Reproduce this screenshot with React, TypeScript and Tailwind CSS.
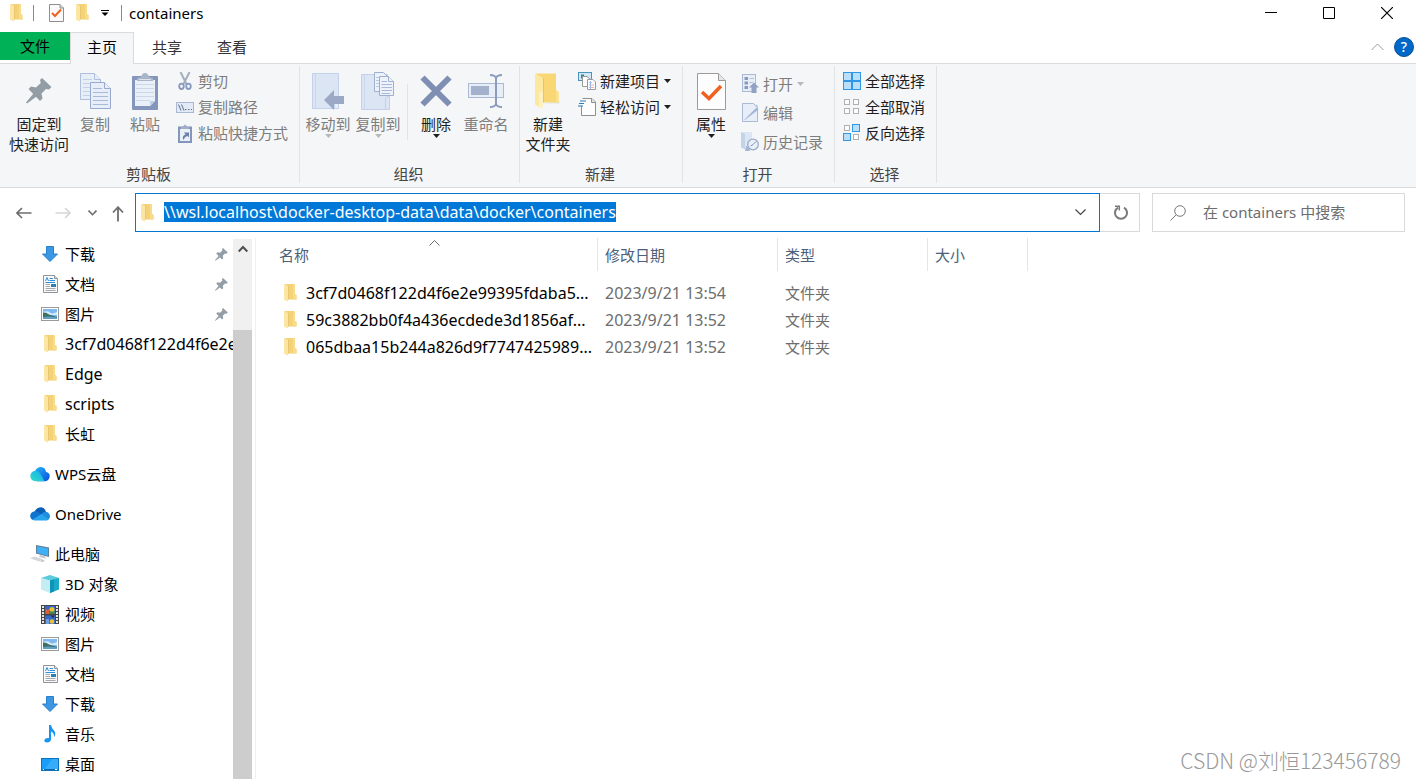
import { useEffect, useRef, useState } from 'react'
import type { ReactNode } from 'react'

type IconProps = { className?: string }

function FolderIcon({ className = '' }: IconProps) {
  return (
    <svg className={className} width="13" height="18" viewBox="0 0 13 18">
      <path d="M1 0H11V10L12.5 11V15.5H3Z" fill="#f3d278" />
      <path d="M9 0H11V10L12.5 11V15.5H9Z" fill="#f8dc8b" />
      <path d="M4 2L5 2.5V15.5H4Z" fill="#e9c670" />
      <path d="M0 0L4 2V17.5L2.5 17L0 15.5Z" fill="#fde6a4" />
    </svg>
  )
}

function BigFolderIcon() {
  return (
    <svg width="26" height="36" viewBox="0 0 26 36">
      <path d="M22 29H26L24 30.5H8Z" fill="#d9d9d9" opacity=".6" />
      <path d="M1 .5H21V17L23.5 19V29.5H4Z" fill="#f9d774" />
      <path d="M21 17L23.5 19V29.5H21Z" fill="#fde08a" />
      <path d="M8 5L9 5.5V29.5H8Z" fill="#eac35c" />
      <path d="M0 .5L8 5V35L4 34L0 31.5Z" fill="#fde89f" />
      <path d="M4 20L8 18V35L4 34Z" fill="#fef2c4" />
    </svg>
  )
}

function PinIcon({ size = 26 }: { size?: number }) {
  return (
    <svg width={size} height={size} viewBox="0 0 26 26" fill="#929da5">
      <path d="M16 0L25.5 9L23 11.5L20 11L15.5 15.5L16.5 20.5L14 23L2.5 11L5 8.5L10 9.5L14.8 5L14 2Z" />
      <path d="M7.5 15.5L0 24.5L1 25.5L10.5 18.5Z" />
    </svg>
  )
}

function CopyIcon() {
  return (
    <svg width="31" height="37" viewBox="0 0 31 37" fill="#e8eef8" stroke="#aebfdc">
      <path d="M.5 .5H14.5L20.5 6.5V26.5H.5Z" />
      <path d="M14.5 .5V6.5H20.5" />
      <path d="M3 6.5H12M3 10.5H10M3 14.5H10M3 18.5H10M3 22.5H10" stroke="#c3d0e6" />
      <path d="M10.5 9.5H24.5L30.5 15.5V35.5H10.5Z" stroke="#98abce" />
      <path d="M24.5 9.5V15.5H30.5" stroke="#98abce" />
      <path d="M13 15.5H22M13 19.5H28M13 23.5H28M13 27.5H28M13 31.5H28" stroke="#a9bad8" />
    </svg>
  )
}

function PasteIcon() {
  return (
    <svg width="26" height="37" viewBox="0 0 26 37">
      <rect y="3" width="26" height="34" rx="1" fill="#8496bb" />
      <path d="M3 7H23V28L18 33H3Z" fill="#eaf0f8" />
      <path d="M23 28H18V33Z" fill="#c3cfe2" />
      <path d="M4 11.5H22M4 15.5H22M4 19.5H22M4 23.5H22M4 27.5H18" stroke="#ccd8ea" />
      <path d="M5 8V5L9 4Q10 0 13 0T17 4L21 5V8Z" fill="#a9b5ca" />
      <path d="M7 6.5H19" stroke="#dde4ef" />
    </svg>
  )
}

function ScissorsIcon() {
  return (
    <svg width="14" height="18" viewBox="0 0 14 18" fill="none">
      <path d="M2.5 0L8.5 12M11.5 0L5.5 12" stroke="#a5aebd" strokeWidth="2" />
      <ellipse cx="3.5" cy="14.3" rx="2.3" ry="2.7" stroke="#8799bf" strokeWidth="1.8" />
      <ellipse cx="10.5" cy="14.3" rx="2.3" ry="2.7" stroke="#8799bf" strokeWidth="1.8" />
    </svg>
  )
}

function CopyPathIcon() {
  return (
    <svg width="18" height="11" viewBox="0 0 18 11">
      <rect x=".5" y=".5" width="17" height="10" fill="#e3eaf5" stroke="#a9b9d4" />
      <path d="M2.5 2.5L5 8.5M5.5 2.5L8 8.5" stroke="#5f708f" fill="none" />
      <path d="M9 7.5H10.5M12 7.5H13.5M15 7.5H16" stroke="#5f708f" />
    </svg>
  )
}

function PasteShortcutIcon() {
  return (
    <svg width="14" height="19" viewBox="0 0 14 19">
      <path d="M0 2.5H14V19H0Z" fill="#8496bb" />
      <path d="M2 5H12V17H2Z" fill="#eaf0f8" />
      <path d="M3 5V3L5.5 2Q7 -1 8.5 2L11 3V5Z" fill="#a2aec5" />
      <path d="M5 15.5Q4 11.5 7.5 10.5L6 8.5H11V13.5L9.5 12Q6.5 12.5 6 15.5Z" fill="#6c80ab" />
    </svg>
  )
}

function MoveToIcon() {
  return (
    <svg width="33" height="37" viewBox="0 0 33 37">
      <path d="M.5 .5H26.5V35.5H.5Z" fill="#dbe5f4" stroke="#c3d1ea" />
      <path d="M3.5 1V35" stroke="#cad7ec" />
      <path d="M22.5 26L26.5 24V35.5H22.5Z" fill="#e8effa" stroke="#c3d1ea" />
      <path d="M12 27L22 17V23H32V31H22V37Z" fill="#9ba9c7" />
    </svg>
  )
}

function CopyToIcon() {
  return (
    <svg width="34" height="39" viewBox="0 0 34 39">
      <path d="M.5 2.5H26.5V37.5H.5Z" fill="#dbe5f4" stroke="#c3d1ea" />
      <path d="M3.5 3V37" stroke="#cad7ec" />
      <path d="M24.5 26L28.5 23.5V37.5H24.5Z" fill="#dbe5f4" stroke="#c3d1ea" />
      <g fill="#edf2fa" stroke="#9fb0ce">
        <path d="M13.5 .5H22.5L27.5 5.5V19.5H13.5Z" />
        <path d="M15 5.5H20M15 8.5H19M15 11.5H19M15 14.5H19" stroke="#b9c7df" />
        <path d="M18.5 4.5H27.5L32.5 9.5V23.5H18.5Z" />
        <path d="M27.5 4.5V9.5H32.5" />
        <path d="M20.5 9.5H26M20.5 12.5H31M20.5 15.5H31M20.5 18.5H31M20.5 21.5H29" stroke="#a9bad8" />
      </g>
    </svg>
  )
}

function DeleteIcon() {
  return (
    <svg width="32" height="32" viewBox="0 0 32 32">
      <path d="M2.5 2.5L29.5 29.5M29.5 2.5L2.5 29.5" stroke="#7f8fb4" strokeWidth="6" />
    </svg>
  )
}

function RenameIcon() {
  return (
    <svg width="36" height="34" viewBox="0 0 36 34" fill="none">
      <rect x=".5" y="9.5" width="35" height="14" fill="#e8eef8" stroke="#a9b9d6" />
      <rect x="3" y="12" width="18" height="9" fill="#a4b1cc" />
      <path d="M28 3V31M22 1Q27 1 28 4Q29 1 34 1M22 33Q27 33 28 30Q29 33 34 33" stroke="#8c9cbf" strokeWidth="2" />
    </svg>
  )
}

function PropertiesIcon() {
  return (
    <svg width="29" height="37" viewBox="0 0 29 37">
      <path d="M.5 .5H21.5L28.5 7.5V36.5H.5Z" fill="#fdfdfd" stroke="#9b9b9b" />
      <path d="M21.5 .5V7.5H28.5" fill="#e6e6e6" stroke="#9b9b9b" />
      <path d="M5 19L12 25.5L24 13" stroke="#f1601d" strokeWidth="3.5" fill="none" />
    </svg>
  )
}

function SmallPropertiesIcon() {
  return (
    <svg width="15" height="18" viewBox="0 0 15 18">
      <path d="M.5 .5H11L14.5 4V17.5H.5Z" fill="#fafafa" stroke="#8f8f8f" />
      <path d="M11 .5V4H14.5" fill="#dcdcdc" stroke="#8f8f8f" />
      <path d="M3 9L6 12L12 5.5" stroke="#f1601d" strokeWidth="2" fill="none" />
    </svg>
  )
}

function NewItemIcon() {
  return (
    <svg width="18" height="18" viewBox="0 0 18 18">
      <rect x=".5" y=".5" width="13" height="8" fill="#cfe8f5" stroke="#4a94bd" />
      <path d="M3 2.5H6V6.5H3Z" fill="#3d7f8f" />
      <path d="M4.5 4.5H9L12.5 7.5V14.5H4.5Z" fill="#fff" stroke="#9a9a9a" />
      <path d="M9.5 7.5H15L17.5 10V17.5H9.5Z" fill="#fff" stroke="#9a9a9a" />
      <path d="M11 10.5H14M11 13H16M11 15.5H16" stroke="#e9b4b4" />
      <path d="M12.5 9V17" stroke="#9dbbe6" />
    </svg>
  )
}

function EasyAccessIcon() {
  return (
    <svg width="18" height="18" viewBox="0 0 18 18">
      <path d="M4.5 .5H14L17.5 4V17.5H3.5V8" fill="#fdfdfd" stroke="#8f8f8f" />
      <path d="M13.5 .5V4.5H17.5" fill="#e3e3e3" stroke="#8f8f8f" />
      <path d="M2 3H8M1 5.5H6M0 8H5" stroke="#2b7bb9" strokeWidth="1.2" />
    </svg>
  )
}

function OpenIcon() {
  return (
    <svg width="17" height="19" viewBox="0 0 17 19">
      <rect x=".5" y=".5" width="13" height="17" fill="#e8eef8" stroke="#a9b9d6" />
      <path d="M2.5 3H6V6H2.5ZM2.5 7.5H6V10.5H2.5ZM2.5 12H6V15H2.5Z" fill="#8799bf" />
      <path d="M7.5 4.5H12M7.5 8.5H11" stroke="#b3c1db" />
      <path d="M12 8.5L17 13.5H14.5V19H9.5V13.5H7Z" fill="#92a2c4" />
    </svg>
  )
}

function EditIcon() {
  return (
    <svg width="17" height="19" viewBox="0 0 17 19">
      <path d="M.5 .5H11.5L15.5 4.5V18.5H.5Z" fill="#e8eef8" stroke="#a9b9d6" />
      <path d="M1.5 17.5L14.5 4.5L16.5 6.5L3.5 16.5Z" fill="#a3b5d6" />
      <path d="M12 2.5L15 1.5L16.5 4" fill="#b9c7e0" />
    </svg>
  )
}

function HistoryIcon() {
  return (
    <svg width="18" height="19" viewBox="0 0 18 19">
      <path d="M1 0H11V15H1Z" fill="#dbe5f4" />
      <path d="M0 0L4 2V17.5L0 15.5Z" fill="#c5d3ea" />
      <circle cx="12" cy="12.5" r="5.3" fill="#eaf0f8" stroke="#9aabca" strokeWidth="1.3" />
      <path d="M12 12.5L15 9.5M12 12.5L9.5 14" stroke="#7f91b5" />
      <path d="M5 14Q8 15 9 19H4Z" fill="#a5b5d0" />
    </svg>
  )
}

// kind: 全选 / 全不选 / 反选
function SelectIcon({ kind }: { kind: 'all' | 'none' | 'invert' }) {
  if (kind === 'all') {
    return (
      <svg width="18" height="18" viewBox="0 0 18 18">
        <rect width="18" height="18" fill="#2f97e5" />
        <path d="M1 1H8V8H1ZM10 1H17V8H10ZM1 10H8V17H1ZM10 10H17V17H10Z" fill="#b9dffb" />
      </svg>
    )
  }
  const cells = [[1, 1], [10, 1], [1, 10], [10, 10]]
  return (
    <svg width="18" height="18" viewBox="0 0 18 18">
      {cells.map(([x, y], i) => {
        const on = kind === 'invert' && (i === 1 || i === 2)
        return on ? (
          <rect key={i} x={x - 0.5} y={y - 0.5} width="7" height="7" fill="#b9dffb" stroke="#2f97e5" />
        ) : (
          <rect key={i} x={x + 0.5} y={y + 0.5} width="5" height="5" fill="#fdfdfd" stroke="#b0b0b0" />
        )
      })}
    </svg>
  )
}

function DownloadIcon() {
  return (
    <svg width="16" height="16" viewBox="0 0 16 16">
      <path d="M4.5 .5H11.5V8H15.5L8 15.5L.5 8H4.5Z" fill="#3b96e3" stroke="#2a7fcb" />
    </svg>
  )
}

function DocumentIcon() {
  return (
    <svg width="15" height="18" viewBox="0 0 15 18">
      <path d="M.5 .5H11.5L14.5 3.5V17.5H.5Z" fill="#fafafa" stroke="#8f9499" />
      <path d="M11.5 .5V3.5H14.5" fill="#ddd" stroke="#8f9499" />
      <path d="M2.5 6L4 2.5L5.5 6" stroke="#2d8fdb" fill="none" />
      <path d="M6.5 3.5H10M6.5 5.5H12M2.5 7.5H12" stroke="#2d8fdb" />
      <path d="M2.5 9.5H7M2.5 11.5H7M2.5 13.5H12.5M2.5 15.5H12.5" stroke="#a5a9ad" />
      <rect x="8" y="9" width="5" height="3" fill="#2b7fb5" />
    </svg>
  )
}

function PictureIcon() {
  return (
    <svg width="18" height="14" viewBox="0 0 18 14">
      <rect x=".5" y=".5" width="17" height="13" fill="#fff" stroke="#9a9a9a" />
      <rect x="2" y="2" width="14" height="10" fill="#7db9f0" />
      <path d="M2 5Q7 3.5 9 5.5T16 5V8H2Z" fill="#d5ebfa" />
      <path d="M2 5.5Q5 5 8 7.5L16 10V12H2Z" fill="#3e7163" />
      <path d="M2 10Q8 9 16 10.5V12H2Z" fill="#5f9fc4" />
    </svg>
  )
}

function WpsIcon() {
  return (
    <svg width="20" height="15" viewBox="0 0 20 15">
      <defs>
        <linearGradient id="wpsLeft" x1="0" y1="1" x2="1" y2="0">
          <stop offset="0" stopColor="#2fe0c4" />
          <stop offset="1" stopColor="#18a8f5" />
        </linearGradient>
        <linearGradient id="wpsRight" x1="0" y1="0" x2="1" y2="1">
          <stop offset="0" stopColor="#22b4f7" />
          <stop offset="1" stopColor="#0a4fdc" />
        </linearGradient>
      </defs>
      <path d="M5 4Q7 0 11 0Q15.5 .5 16 5Q20 5.5 19.7 9.5Q19 14 14.5 14.3H7Z" fill="url(#wpsRight)" />
      <path d="M5.5 3.8Q9 4 10.5 7L14.5 14.3H5.5Q.5 14 .3 9Q.5 4.5 5.5 3.8Z" fill="url(#wpsLeft)" />
    </svg>
  )
}

function OneDriveIcon() {
  return (
    <svg width="20" height="14" viewBox="0 0 20 14">
      <path d="M4.5 4.5Q7 0 11 .3Q15 .8 16 5L10 8.5Z" fill="#0b5fb5" />
      <path d="M3 13Q0 11.5 .2 8.5Q.8 4.5 5 4.2L8 5L12 8L4 13Z" fill="#0f73cf" />
      <path d="M11.5 7Q14 4.2 17 5Q20 6.5 20 9.5Q19.5 13 16 13.3L9 9Z" fill="#1f8de0" />
      <path d="M2.5 12.5L11.5 7L18.5 12.3Q17.5 13.5 16 13.5H5Q3.5 13.5 2.5 12.5Z" fill="#29a5ee" />
    </svg>
  )
}

function PcIcon() {
  return (
    <svg width="20" height="18" viewBox="0 0 20 18">
      <path d="M6 0L19 2.5V12L6 8.5Z" fill="#5d7f9d" />
      <path d="M7 1.2L18 3.4V10.8L7 7.8Z" fill="#3fb0f5" />
      <path d="M10 10L15 11.3L16 13.5L9 12Z" fill="#c2c8cd" />
      <path d="M0 13.2L5 11.5L13.5 14.5L9 16.5Z" fill="#d3d7da" />
      <path d="M10 16L13 15L15 16L12 17Z" fill="#b9bec2" />
    </svg>
  )
}

function CubeIcon() {
  return (
    <svg width="18" height="18" viewBox="0 0 18 18">
      <path d="M9 2.5L18 3V14.5L9 18Z" fill="#1aa9c6" />
      <path d="M0 3L9 5.5V18L0 14.5Z" fill="#c3eef3" />
      <path d="M9 0L18 3L9 5.5L0 3Z" fill="#5ccbdc" />
      <path d="M9 5.5L13 4.5V16.5L9 18Z" fill="#0f93b8" />
    </svg>
  )
}

function VideoIcon() {
  return (
    <svg width="18" height="19" viewBox="0 0 18 19">
      <rect width="18" height="19" fill="#454545" />
      <path d="M2 1V19M16 1V19" stroke="#e6e6e6" strokeWidth="2" strokeDasharray="2 1" />
      <path d="M4 1H14V9H4ZM4 10.5H14V19H4Z" fill="#3568c9" />
      <circle cx="11" cy="4.5" r="2.5" fill="#edc12f" />
      <path d="M4.5 4.5H8V9H4.5Z" fill="#d8603c" />
      <path d="M8.5 6.5H13.5V9H8.5Z" fill="#4a8a3b" />
      <circle cx="11" cy="16.5" r="2.3" fill="#edc12f" />
      <path d="M5 14H8V19H5Z" fill="#6c9fe8" />
      <path d="M10 10.5H13V12.5H11Z" fill="#28323f" />
    </svg>
  )
}

function MusicIcon() {
  return (
    <svg width="12" height="18" viewBox="0 0 12 18">
      <path d="M5 0H7Q7.5 3 10 5.5Q12.5 8.5 10 12.5Q10.5 8 7 6.5V14.5Q6.5 17.5 3 17.5Q0 17.2 .3 15Q1 12.7 5 13Z" fill="#1795f0" />
    </svg>
  )
}

function DesktopIcon() {
  return (
    <svg width="18" height="13" viewBox="0 0 18 13">
      <rect x=".5" y=".5" width="17" height="12" fill="#1a9df8" stroke="#0c73bd" />
      <path d="M11 1H17V11H4Z" fill="#37acfb" />
      <path d="M1.5 11.5H16.5" stroke="#0a67ac" />
      <path d="M2 11.5H3M14 11.5H16" stroke="#fff" />
    </svg>
  )
}

function Caret({ className = '' }: IconProps) {
  return (
    <svg className={className} width="7" height="4" viewBox="0 0 7 4" fill="currentColor">
      <path d="M0 0H7L3.5 4Z" />
    </svg>
  )
}

type RibbonButtonProps = {
  icon: ReactNode
  lines: string[]
  disabled?: boolean
  menu?: boolean
}

function BigButton({ icon, lines, disabled, menu }: RibbonButtonProps) {
  return (
    <button
      type="button"
      disabled={disabled}
      className="flex min-w-[50px] flex-col items-center px-px pt-2 text-[#1e1e1e] disabled:text-[#7d7d7d]"
    >
      <span className="flex h-[42px] items-center pb-1">{icon}</span>
      {lines.map(line => (
        <span key={line} className="whitespace-nowrap leading-5">{line}</span>
      ))}
      {menu && <Caret className={disabled ? 'text-[#b8b8b8]' : ''} />}
    </button>
  )
}

function SmallButton({ icon, lines, disabled, menu }: RibbonButtonProps) {
  return (
    <button
      type="button"
      disabled={disabled}
      className="flex flex-1 items-center gap-1 whitespace-nowrap text-[#1e1e1e] disabled:text-[#7d7d7d]"
    >
      <span className="flex w-[18px] justify-center">{icon}</span>
      {lines[0]}
      {menu && <Caret className={disabled ? 'text-[#b8b8b8]' : ''} />}
    </button>
  )
}

function RibbonGroup({ label, width, children }: { label: string; width: string; children: ReactNode }) {
  return (
    <section aria-label={label} className={`relative flex flex-col ${width}`}>
      <div className="flex h-[100px]">{children}</div>
      <div className="pr-[3px] text-center leading-5 text-[#444]">{label}</div>
      <span className="absolute bottom-1 right-0 top-0.5 w-px bg-[#e2e3e4]" />
    </section>
  )
}

type TreeItem = { label: string; icon: ReactNode; root?: boolean; pinned?: boolean; latin?: boolean }

const treeItems: TreeItem[] = [
  { label: '下载', icon: <DownloadIcon />, pinned: true },
  { label: '文档', icon: <DocumentIcon />, pinned: true },
  { label: '图片', icon: <PictureIcon />, pinned: true },
  { label: '3cf7d0468f122d4f6e2e', icon: <FolderIcon />, latin: true },
  { label: 'Edge', icon: <FolderIcon />, latin: true },
  { label: 'scripts', icon: <FolderIcon />, latin: true },
  { label: '长虹', icon: <FolderIcon /> },
  { label: 'WPS云盘', icon: <WpsIcon />, root: true },
  { label: 'OneDrive', icon: <OneDriveIcon />, root: true },
  { label: '此电脑', icon: <PcIcon />, root: true },
  { label: '3D 对象', icon: <CubeIcon /> },
  { label: '视频', icon: <VideoIcon /> },
  { label: '图片', icon: <PictureIcon /> },
  { label: '文档', icon: <DocumentIcon /> },
  { label: '下载', icon: <DownloadIcon /> },
  { label: '音乐', icon: <MusicIcon /> },
  { label: '桌面', icon: <DesktopIcon /> },
]

const files = [
  { name: '3cf7d0468f122d4f6e2e99395fdaba5...', date: '2023/9/21 13:54', type: '文件夹' },
  { name: '59c3882bb0f4a436ecdede3d1856af...', date: '2023/9/21 13:52', type: '文件夹' },
  { name: '065dbaa15b244a826d9f7747425989...', date: '2023/9/21 13:52', type: '文件夹' },
]

const columns = [
  { label: '名称', width: 'w-[342px]', pad: 'pl-[23px]' },
  { label: '修改日期', width: 'w-[180px]', pad: 'pl-[7px]' },
  { label: '类型', width: 'w-[150px]', pad: 'pl-[7px]' },
  { label: '大小', width: 'w-[100px]', pad: 'pl-[7px]' },
]

function TitleBar() {
  return (
    <header className="flex h-[26px] shrink-0 items-center">
      <div className="flex flex-1 items-center pl-2.5">
        <FolderIcon />
        <span className="ml-2.5 h-4 w-px bg-[#8a8a8a]" />
        <button type="button" aria-label="属性" className="ml-[15px]"><SmallPropertiesIcon /></button>
        <button type="button" aria-label="新建文件夹" className="ml-3"><FolderIcon /></button>
        <button type="button" aria-label="自定义快速访问工具栏" className="ml-3">
          <svg width="8" height="6" viewBox="0 0 8 6">
            <path d="M0 .5H8" stroke="#000" />
            <path d="M.5 2.5H7.5L4 6Z" />
          </svg>
        </button>
        <span className="ml-3 h-4 w-px bg-[#8a8a8a]" />
        <h1 className="ml-[7px]">containers</h1>
      </div>
      <button type="button" aria-label="最小化" className="flex w-[58px] justify-center">
        <svg width="12" height="12" viewBox="0 0 12 12"><path d="M0 5.5H12" stroke="#000" /></svg>
      </button>
      <button type="button" aria-label="最大化" className="flex w-[58px] justify-center">
        <svg width="12" height="12" viewBox="0 0 12 12"><path d="M.5 .5H11.5V11.5H.5Z" fill="none" stroke="#000" /></svg>
      </button>
      <button type="button" aria-label="关闭" className="flex w-[58px] justify-center">
        <svg width="12" height="12" viewBox="0 0 12 12"><path d="M0 0L12 12M12 0L0 12" stroke="#000" strokeWidth="1.2" /></svg>
      </button>
    </header>
  )
}

function Tabs() {
  const [active, setActive] = useState('主页')
  return (
    <div className="mt-1.5 flex h-8 shrink-0 items-start border-b border-[#dadbdc]">
      <button type="button" className="h-7 w-[70px] bg-[#00b157]">文件</button>
      <div role="tablist" className="flex h-8">
        {['主页', '共享', '查看'].map(tab => (
          <button
            key={tab}
            type="button"
            role="tab"
            aria-selected={tab === active}
            onClick={() => setActive(tab)}
            className={`w-16 border border-b-0 pb-[3px] not-first:ml-px ${
              tab === active ? 'h-8 border-[#dadbdc] bg-[#f5f6f7]' : 'h-[31px] border-transparent text-[#333]'
            }`}
          >
            {tab}
          </button>
        ))}
      </div>
      <div className="ml-auto flex h-[30px] items-center gap-2.5 pr-0.5">
        <button type="button" aria-label="最小化功能区" className="text-[#9a9a9a]">
          <svg width="13" height="8" viewBox="0 0 13 8" fill="none" stroke="currentColor">
            <path d="M.5 7L6.5 1L12.5 7" />
          </svg>
        </button>
        <button
          type="button"
          className="h-5 w-5 rounded-full border border-[#0a4f96] bg-[#0068c8] text-sm font-medium leading-4 text-white"
        >
          ?
        </button>
      </div>
    </div>
  )
}

function Ribbon() {
  return (
    <div className="flex h-[124px] shrink-0 border-b border-[#dadbdc] bg-[#f5f6f7]">
      <RibbonGroup label="剪贴板" width="w-[300px]">
        <div className="flex pl-2">
          <BigButton icon={<PinIcon />} lines={['固定到', '快速访问']} />
          <BigButton icon={<CopyIcon />} lines={['复制']} disabled />
          <BigButton icon={<PasteIcon />} lines={['粘贴']} disabled />
        </div>
        <div className="ml-1.5 mt-1 flex h-[78px] flex-col">
          <SmallButton icon={<ScissorsIcon />} lines={['剪切']} disabled />
          <SmallButton icon={<CopyPathIcon />} lines={['复制路径']} disabled />
          <SmallButton icon={<PasteShortcutIcon />} lines={['粘贴快捷方式']} disabled />
        </div>
      </RibbonGroup>

      <RibbonGroup label="组织" width="w-[220px]">
        <div className="flex pl-[3px]">
          <BigButton icon={<MoveToIcon />} lines={['移动到']} disabled menu />
          <BigButton icon={<CopyToIcon />} lines={['复制到']} disabled menu />
          <span className="ml-1 mr-[3px] mt-5 h-14 w-px bg-[#e2e3e4]" />
          <BigButton icon={<DeleteIcon />} lines={['删除']} menu />
          <BigButton icon={<RenameIcon />} lines={['重命名']} disabled />
        </div>
      </RibbonGroup>

      <RibbonGroup label="新建" width="w-[163px]">
        <div className="flex pl-[3px]">
          <BigButton icon={<BigFolderIcon />} lines={['新建', '文件夹']} />
        </div>
        <div className="ml-[5px] mt-1 flex h-[52px] flex-col">
          <SmallButton icon={<NewItemIcon />} lines={['新建项目']} menu />
          <SmallButton icon={<EasyAccessIcon />} lines={['轻松访问']} menu />
        </div>
      </RibbonGroup>

      <RibbonGroup label="打开" width="w-[152px]">
        <div className="flex pl-[3px]">
          <BigButton icon={<PropertiesIcon />} lines={['属性']} menu />
        </div>
        <div className="ml-[5px] mt-[5px] flex h-[87px] flex-col">
          <SmallButton icon={<OpenIcon />} lines={['打开']} disabled menu />
          <SmallButton icon={<EditIcon />} lines={['编辑']} disabled />
          <SmallButton icon={<HistoryIcon />} lines={['历史记录']} disabled />
        </div>
      </RibbonGroup>

      <RibbonGroup label="选择" width="w-[102px]">
        <div className="ml-2 mt-1 flex h-[78px] flex-col">
          <SmallButton icon={<SelectIcon kind="all" />} lines={['全部选择']} />
          <SmallButton icon={<SelectIcon kind="none" />} lines={['全部取消']} />
          <SmallButton icon={<SelectIcon kind="invert" />} lines={['反向选择']} />
        </div>
      </RibbonGroup>
    </div>
  )
}

function AddressBar() {
  const pathRef = useRef<HTMLInputElement>(null)

  useEffect(() => {
    pathRef.current?.focus()
    pathRef.current?.select()
  }, [])

  return (
    <div className="flex h-[50px] shrink-0 items-start pr-[11px] pt-[5px]">
      <nav className="flex h-[39px] w-[135px] items-center text-[#6d6d6d]">
        <button type="button" aria-label="后退" className="ml-4">
          <svg width="16" height="12" viewBox="0 0 16 12" fill="none" stroke="currentColor" strokeWidth="1.6">
            <path d="M6 1L1 6L6 11M1 6H15.5" />
          </svg>
        </button>
        <button type="button" aria-label="前进" className="ml-[23px] text-[#d6d6d6]" disabled>
          <svg width="16" height="12" viewBox="0 0 16 12" fill="none" stroke="currentColor" strokeWidth="1.6">
            <path d="M10 1L15 6L10 11M15 6H.5" />
          </svg>
        </button>
        <button type="button" aria-label="最近位置" className="ml-[17px]">
          <svg width="9" height="6" viewBox="0 0 9 6" fill="none" stroke="currentColor" strokeWidth="1.6">
            <path d="M.5 .5L4.5 4.7L8.5 .5" />
          </svg>
        </button>
        <button type="button" aria-label="上移" className="ml-[15px] pt-0.5">
          <svg width="12" height="16" viewBox="0 0 12 16" fill="none" stroke="currentColor" strokeWidth="1.8">
            <path d="M1 6.5L6 1.2L11 6.5M6 1.2V15.5" />
          </svg>
        </button>
      </nav>

      <div className="flex h-[39px] flex-1 items-center border border-[#0078d7] pl-[5px]">
        <FolderIcon />
        <input
          ref={pathRef}
          aria-label="地址"
          spellCheck={false}
          defaultValue="\\wsl.localhost\docker-desktop-data\data\docker\containers"
          className="ml-2.5 min-w-0 flex-1 pb-0.5 text-base leading-5 outline-none selection:bg-[#0078d7] selection:text-white"
        />
        <button type="button" aria-label="以前的位置" className="pr-[13px] text-[#444]">
          <svg width="11" height="7" viewBox="0 0 11 7" fill="none" stroke="currentColor" strokeWidth="1.2">
            <path d="M.5 .5L5.5 5.5L10.5 .5" />
          </svg>
        </button>
      </div>
      <button
        type="button"
        aria-label="刷新"
        className="flex h-[39px] w-10 items-center justify-center border border-l-0 border-[#d9d9d9] pl-[3px] text-[#7a7a7a]"
      >
        <svg width="15" height="15" viewBox="0 0 15 15" fill="none" stroke="currentColor" strokeWidth="2">
          <path d="M10 2.6A6 6 0 1 1 4 2.6" />
          <path d="M1 1.3H5.3V5.5" strokeWidth="1.5" />
        </svg>
      </button>

      <label className="ml-3 flex h-[39px] w-[253px] items-center border border-[#d9d9d9] pl-[17px]">
        <svg width="16" height="16" viewBox="0 0 16 16" fill="none" stroke="#7a7a7a">
          <circle cx="10" cy="6" r="5.3" />
          <path d="M6.2 9.8L.5 15.5" />
        </svg>
        <input
          aria-label="搜索"
          placeholder="在 containers 中搜索"
          className="ml-[17px] min-w-0 flex-1 pb-0.5 outline-none placeholder:text-[#6d6d6d]"
        />
      </label>
    </div>
  )
}

function Sidebar() {
  return (
    <aside className="flex w-[256px] shrink-0 border-r border-[#f0f0f0]">
      <ul className="w-[233px] overflow-hidden pt-px">
        {treeItems.map((item, i) => (
          <li key={i} className={item.root ? 'mt-2.5' : i === 10 ? 'mt-0' : ''}>
            <a
              href="#"
              className={`flex h-[30px] items-center whitespace-nowrap ${item.root ? 'pl-[30px]' : 'pl-10'}`}
            >
              <span className="flex w-5 shrink-0 justify-center">{item.icon}</span>
              <span className={`ml-[5px] flex-1 ${item.latin ? 'text-base leading-5' : ''}`}>{item.label}</span>
              {item.pinned && <span className="mr-[5px]"><PinIcon size={13} /></span>}
            </a>
          </li>
        ))}
      </ul>
      <div className="mt-px flex w-[19px] flex-col bg-[#f0f0f0]">
        <button type="button" aria-label="向上滚动" className="flex h-[91px] justify-center pt-1.5">
          <svg width="10" height="8" viewBox="0 0 10 8" fill="none" stroke="#505050" strokeWidth="2">
            <path d="M.7 6.5L5 2L9.3 6.5" />
          </svg>
        </button>
        <div className="flex-1 bg-[#cdcdcd]" />
      </div>
    </aside>
  )
}

function FileList() {
  return (
    <main className="min-w-0 flex-1">
      <table className="w-full table-fixed text-left">
        <thead>
          <tr className="text-[#4c607a]">
            {columns.map((col, i) => (
              <th key={col.label} className={`h-[41px] p-0 align-top font-normal ${col.width}`}>
                <div className={`relative flex h-[33px] items-center border-r border-[#e5e5e5] ${col.pad}`}>
                  {col.label}
                  {i === 0 && (
                    <svg className="absolute left-1/2 top-0.5 ml-0.5" width="11" height="6" viewBox="0 0 11 6" fill="none">
                      <path d="M.5 5.5L5.5 .5L10.5 5.5" stroke="#6d6d6d" />
                    </svg>
                  )}
                </div>
              </th>
            ))}
            <th className="p-0" />
          </tr>
        </thead>
        <tbody>
          {files.map(file => (
            <tr key={file.name} className="h-[27px] text-[#6d6d6d]">
              <td className="p-0">
                <a href="#" className="flex items-center whitespace-nowrap pl-7 text-base leading-5 text-black">
                  <FolderIcon />
                  <span className="ml-[9px]">{file.name}</span>
                </a>
              </td>
              <td className="p-0 pl-[7px] text-base leading-5">{file.date}</td>
              <td className="p-0 pl-[7px]">{file.type}</td>
              <td className="p-0" />
              <td className="p-0" />
            </tr>
          ))}
        </tbody>
      </table>
    </main>
  )
}

export default function App() {
  return (
    <div className="relative flex h-screen flex-col overflow-hidden bg-white font-['Noto_Sans','Noto_Sans_CJK_SC',sans-serif] text-[15px] leading-5 text-black">
      <TitleBar />
      <Tabs />
      <Ribbon />
      <AddressBar />
      <div className="flex min-h-0 flex-1">
        <Sidebar />
        <FileList />
      </div>
      <div className="absolute bottom-[7px] right-[15px] font-['Noto_Sans_CJK_SC',sans-serif] text-[21px] font-light leading-6 text-[#999]">
        CSDN @刘恒123456789
      </div>
    </div>
  )
}
